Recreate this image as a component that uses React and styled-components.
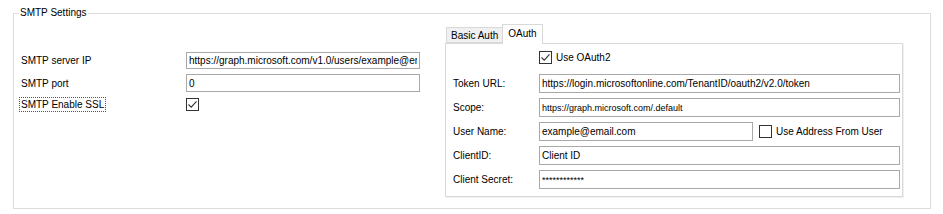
import React from "react"
import styled, { createGlobalStyle } from "styled-components"

const GlobalStyle = createGlobalStyle`
  html, body {
    margin: 0;
    background: #fff;
  }
  body {
    width: 943px;
    height: 214px;
    overflow: hidden;
    font-family: "Liberation Sans", Arial, sans-serif;
    font-size: 10px;
    color: #000;
  }
`

const Group = styled.fieldset`
  box-sizing: border-box;
  margin: 7px 0 0 13px;
  width: 918px;
  height: 202px;
  padding: 0;
  border: 1px solid #dcdcdc;
  min-width: 0;
`

const Legend = styled.legend`
  margin-left: 5px;
  padding: 0 1px;
  font-size: 10px;
  line-height: 12px;
  color: #000;
`

const Body = styled.div`
  display: flex;
  align-items: flex-start;
  padding: 5px 0 0 6px;
`

const LeftCol = styled.div`
  width: 425px;
  margin-top: 28px;
  display: grid;
  grid-template-columns: 166px 234px;
  grid-auto-rows: min-content;
  row-gap: 5px;
  align-items: center;
`

const Label = styled.span`
  line-height: 13px;
  white-space: nowrap;
  justify-self: start;
  border: 1px dotted ${p => (p.$focus ? "#555" : "transparent")};
  padding: 0 1px;
  margin-left: -1px;
`

const TextBox = styled.input`
  box-sizing: border-box;
  width: ${p => p.$w || "100%"};
  height: ${p => p.$h || 19}px;
  margin: 0;
  padding: 0 2px;
  border: 1px solid #a9a9a9;
  background: #fff;
  font-family: "Liberation Sans", Arial, sans-serif;
  font-size: ${p => p.$fs || 10}px;
  color: #000;
  outline: none;
`

const Box = styled.span`
  box-sizing: border-box;
  display: inline-flex;
  align-items: center;
  justify-content: center;
  width: 13px;
  height: 13px;
  border: 1px solid #333;
  background: #fff;
  flex: none;
`

const Check = ({ checked }) => (
  <Box>
    {checked && (
      <svg width="11" height="11" viewBox="0 0 11 11">
        <path d="M1.5 5.5 L4.2 8.2 L9.5 2.3" fill="none" stroke="#333" strokeWidth="1.1" />
      </svg>
    )}
  </Box>
)

const CheckLine = styled.label`
  display: flex;
  align-items: center;
  gap: 4px;
  white-space: nowrap;
  line-height: 13px;
`

const Tabs = styled.div`
  width: 458px;
`

const TabStrip = styled.div`
  display: flex;
  align-items: flex-end;
  height: 19px;
  padding-left: 1px;
  position: relative;
  z-index: 1;
`

const Tab = styled.div`
  box-sizing: border-box;
  height: ${p => (p.$active ? 20 : 16)}px;
  margin-bottom: ${p => (p.$active ? -1 : 0)}px;
  padding: ${p => (p.$active ? "2px 5px 0" : "1px 4px 0")};
  border: 1px solid #d9d9d9;
  border-bottom: ${p => (p.$active ? "none" : "1px solid #d9d9d9")};
  margin-left: ${p => (p.$active ? -1 : 0)}px;
  background: ${p => (p.$active ? "#fff" : "#f0f0f0")};
  line-height: 13px;
  white-space: nowrap;
`

const Panel = styled.div`
  box-sizing: border-box;
  height: 154px;
  border: 1px solid #d9d9d9;
  box-shadow: 1px 1px 0 #f0f0f0;
  padding: 7px 2px 0 6px;
  display: grid;
  grid-template-columns: 87px 1fr;
  grid-auto-rows: min-content;
  row-gap: 5px;
  align-items: center;
`

const PanelCheck = styled.div`
  grid-column: 2;
  height: 14px;
  margin-bottom: 4px;
`

const Inline = styled.div`
  display: flex;
  align-items: center;
  gap: 6px;
`

export default function App() {
  return (
    <>
      <GlobalStyle />
      <Group>
        <Legend>SMTP Settings</Legend>
        <Body>
          <LeftCol>
            <Label>SMTP server IP</Label>
            <TextBox $h={17} readOnly defaultValue="https://graph.microsoft.com/v1.0/users/example@email.com/sendMail" />
            <Label>SMTP port</Label>
            <TextBox $h={18} readOnly defaultValue="0" />
            <Label $focus>SMTP Enable SSL</Label>
            <CheckLine>
              <Check checked />
            </CheckLine>
          </LeftCol>

          <Tabs>
            <TabStrip>
              <Tab>Basic Auth</Tab>
              <Tab $active>OAuth</Tab>
            </TabStrip>
            <Panel>
              <PanelCheck>
                <CheckLine>
                  <Check checked />
                  Use OAuth2
                </CheckLine>
              </PanelCheck>
              <Label>Token URL:</Label>
              <TextBox readOnly defaultValue="https://login.microsoftonline.com/TenantID/oauth2/v2.0/token" />
              <Label>Scope:</Label>
              <TextBox $fs={9} readOnly defaultValue="https://graph.microsoft.com/.default" />
              <Label>User Name:</Label>
              <Inline>
                <TextBox $w="214px" readOnly defaultValue="example@email.com" />
                <CheckLine>
                  <Check />
                  Use Address From User
                </CheckLine>
              </Inline>
              <Label>ClientID:</Label>
              <TextBox readOnly defaultValue="Client ID" />
              <Label>Client Secret:</Label>
              <TextBox $fs={9} readOnly defaultValue="************" />
            </Panel>
          </Tabs>
        </Body>
      </Group>
    </>
  )
}
